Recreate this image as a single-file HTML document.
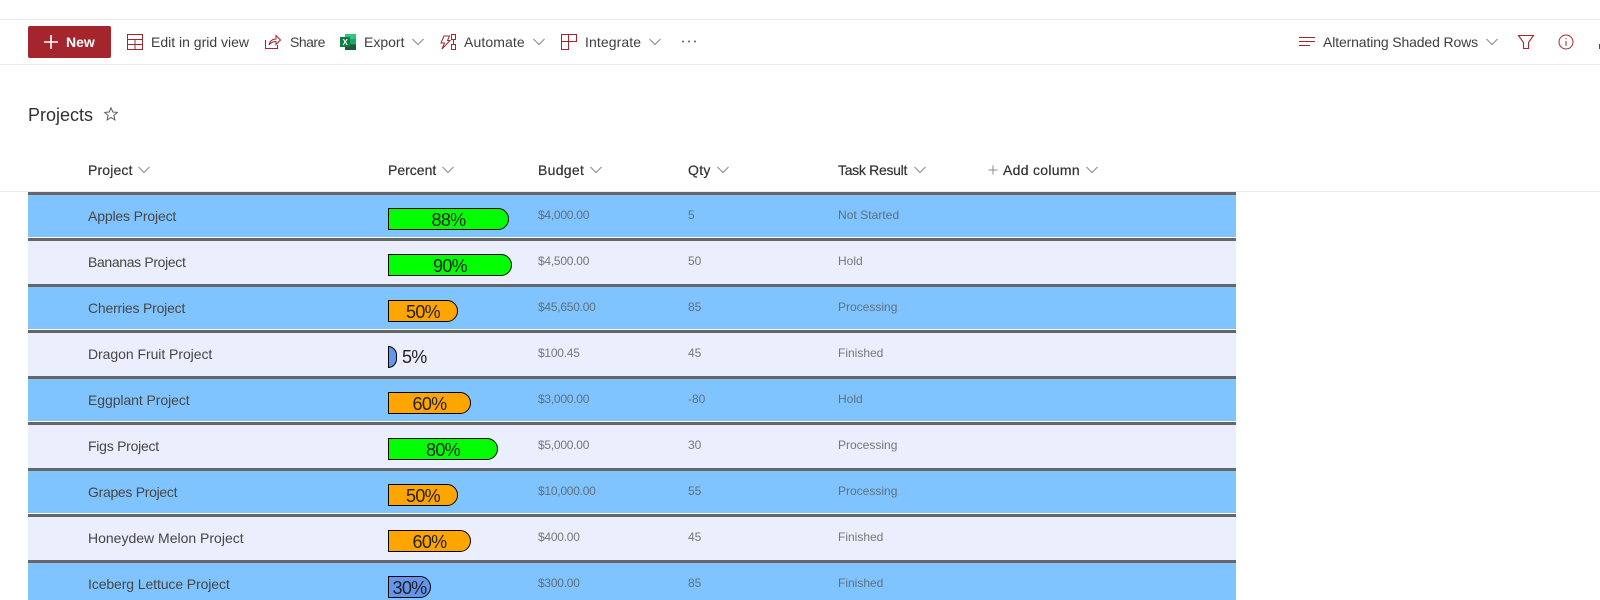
<!DOCTYPE html>
<html><head><meta charset="utf-8"><style>
html,body{margin:0;padding:0;background:#fff;width:1600px;height:600px;overflow:hidden}
body{position:relative;font-family:"Liberation Sans",sans-serif;color:#323130}
.a{position:absolute;white-space:nowrap}
.hl{position:absolute;left:0;width:1600px;height:1px;background:#edebe9}
.t{position:absolute;white-space:nowrap;font-size:14px;line-height:20px;color:#3f3e3d}
.h{position:absolute;white-space:nowrap;font-size:14px;line-height:20px;color:#323130;top:160px;-webkit-text-stroke:.2px #323130}
svg{position:absolute;overflow:visible;fill:none}
.row{position:absolute;left:28px;width:1208px;height:46px;box-sizing:border-box;border-top:3px solid #666;overflow:hidden}
.blue{background:#80c4ff;border-bottom:1px solid #fff}
.lav{background:#eaeefd}
.p{position:absolute;left:60px;top:11px;font-size:14px;line-height:20px;color:#484644;white-space:nowrap}
.s{position:absolute;top:12px;font-size:12px;line-height:16px;color:#777;white-space:nowrap}
.m{letter-spacing:-.25px}
.blue .s{color:#5f6f7d}
.bar{position:absolute;left:360px;top:13px;height:22px;box-sizing:border-box;border:1px solid #000;border-radius:0 11px 11px 0;font-size:18px;line-height:22px;letter-spacing:-.7px;text-align:center;color:#222}
.g{background:#0f0}.o{background:orange}.b{background:#6495ed}
</style></head><body>
<div class="hl" style="top:19px"></div>
<div class="hl" style="top:64px"></div>
<div class="a" style="left:28px;top:26px;width:83px;height:32px;background:#a4262c;border-radius:2px"></div>
<svg style="left:43px;top:34px" width="16" height="16"><path d="M8 1V15M1 8H15" stroke="#fff" stroke-width="1.6"/></svg>
<div class="a" style="left:66px;top:32px;font-size:14px;line-height:20px;font-weight:bold;color:#fff">New</div>

<svg style="left:127px;top:34px" width="16" height="16"><path d="M.5.5H15.500V15.500H.5ZM.5 5.500H15.500M.5 10.500H15.500M8 5.500V15.500" stroke="#a4262c"/></svg>
<div class="t" style="left:151px;top:32px">Edit in grid view</div>
<svg style="left:265px;top:34px" width="16" height="16"><path d="M.5 6V14.500H12.500V11M4 11C5 6.500 8 5 11 5V1.500L15.500 6 11 10.500V7.500C8 7.500 6 8.500 4 11Z" stroke="#a4262c"/></svg>
<div class="t" style="left:290px;top:32px;letter-spacing:-.5px">Share</div>
<svg style="left:340px;top:34px" width="16" height="16"><rect x="5" width="11" height="5.500" fill="#33c481"/><rect x="5" y="5" width="11" height="5.500" fill="#21a366"/><rect x="5" y="10.500" width="11" height="5.500" fill="#185c37"/><rect y="3" width="10" height="10" fill="#107c41"/><text x="2.500" y="11" font-family="Liberation Sans" font-size="8" font-weight="bold" fill="#fff">X</text></svg>
<div class="t" style="left:364px;top:32px">Export</div>
<svg style="left:412px;top:38px" width="12" height="8"><path d="M.5 1L6 6.500 11.500 1" stroke="#8a8886"/></svg>
<svg style="left:440px;top:34px" width="16" height="16"><path d="M4 2H9.500L7.500 6.500H10L2 15 4.500 9H1ZM11.500.5H15.500V5.500H11.500ZM11.500 10.500H15.500V15.500H11.500ZM13.500 5.500V10.500" stroke="#a4262c"/></svg>
<div class="t" style="left:464px;top:32px;letter-spacing:.1px">Automate</div>
<svg style="left:533px;top:38px" width="12" height="8"><path d="M.5 1L6 6.500 11.500 1" stroke="#8a8886"/></svg>
<svg style="left:561px;top:34px" width="16" height="16"><path d="M.5.500H15.500V7.500H.5ZM.5 7.500V15.500H7.500V.5" stroke="#a4262c"/></svg>
<div class="t" style="left:585px;top:32px;letter-spacing:.1px">Integrate</div>
<svg style="left:649px;top:38px" width="12" height="8"><path d="M.5 1L6 6.500 11.500 1" stroke="#8a8886"/></svg>
<svg style="left:681px;top:40px" width="16" height="4"><circle cx="2" cy="1.500" r="1" fill="#605e5c"/><circle cx="8" cy="1.500" r="1" fill="#605e5c"/><circle cx="14" cy="1.500" r="1" fill="#605e5c"/></svg>

<svg style="left:1299px;top:37px" width="16" height="10"><path d="M0 .5H16M0 4.500H16M0 8.500H11" stroke="#a4262c"/></svg>
<div class="t" style="left:1323px;top:32px;letter-spacing:-.13px">Alternating Shaded Rows</div>
<svg style="left:1486px;top:38px" width="12" height="8"><path d="M.5 1L6 6.500 11.500 1" stroke="#8a8886"/></svg>
<svg style="left:1518px;top:35px" width="16" height="15"><path d="M.5.500H15.500L10.500 7.500V13.500H5.500V7.500Z" stroke="#a4262c" stroke-width="1.1"/></svg>
<svg style="left:1558px;top:34px" width="16" height="16"><circle cx="8" cy="8" r="7" stroke="#a4262c"/><path d="M8 7V12M8 4V5.200" stroke="#a4262c"/></svg>
<div class="a" style="left:1599px;top:44px;width:1px;height:5px;background:#a4262c"></div>

<div class="a" style="left:28px;top:103px;font-size:18px;line-height:24px;color:#323130">Projects</div>
<svg style="left:104px;top:107px" width="14" height="14"><path d="M7 .8L8.800 5 13.300 5.400 9.900 8.400 10.900 12.900 7 10.500 3.100 12.900 4.100 8.400 .7 5.400 5.200 5Z" stroke="#605e5c"/></svg>

<div class="h" style="left:88px;letter-spacing:.15px">Project</div>
<svg style="left:138px;top:166px" width="12" height="8"><path d="M.5 1L6 6.500 11.500 1" stroke="#8a8886"/></svg>
<div class="h" style="left:388px">Percent</div>
<svg style="left:442px;top:166px" width="12" height="8"><path d="M.5 1L6 6.500 11.500 1" stroke="#8a8886"/></svg>
<div class="h" style="left:538px;letter-spacing:.3px">Budget</div>
<svg style="left:590px;top:166px" width="12" height="8"><path d="M.5 1L6 6.500 11.500 1" stroke="#8a8886"/></svg>
<div class="h" style="left:688px;letter-spacing:.3px">Qty</div>
<svg style="left:717px;top:166px" width="12" height="8"><path d="M.5 1L6 6.500 11.500 1" stroke="#8a8886"/></svg>
<div class="h" style="left:838px;letter-spacing:-.3px">Task Result</div>
<svg style="left:914px;top:166px" width="12" height="8"><path d="M.5 1L6 6.500 11.500 1" stroke="#8a8886"/></svg>
<svg style="left:988px;top:165px" width="10" height="10"><path d="M5 .5V9.500M.5 5H9.500" stroke="#8a8886"/></svg>
<div class="h" style="left:1003px;letter-spacing:.3px">Add column</div>
<svg style="left:1086px;top:166px" width="12" height="8"><path d="M.5 1L6 6.500 11.500 1" stroke="#8a8886"/></svg>
<div class="hl" style="top:191px"></div>

<div class="row blue" style="top:192px"><span class="p" style="letter-spacing:-.15px">Apples Project</span><div class="bar g" style="width:121px">88%</div><span class="s m" style="left:510px">$4,000.00</span><span class="s" style="left:660px">5</span><span class="s" style="left:810px;letter-spacing:.05px">Not Started</span></div>
<div class="row lav" style="top:238px"><span class="p" style="letter-spacing:-.35px">Bananas Project</span><div class="bar g" style="width:124px">90%</div><span class="s m" style="left:510px">$4,500.00</span><span class="s" style="left:660px">50</span><span class="s" style="left:810px">Hold</span></div>
<div class="row blue" style="top:284px"><span class="p" style="letter-spacing:-.2px">Cherries Project</span><div class="bar o" style="width:70px">50%</div><span class="s m" style="left:510px">$45,650.00</span><span class="s" style="left:660px">85</span><span class="s" style="left:810px">Processing</span></div>
<div class="row lav" style="top:330px"><span class="p" style="letter-spacing:-.05px">Dragon Fruit Project</span><div class="bar b" style="width:9px"></div><span class="a" style="left:374px;top:13px;font-size:18px;line-height:22px;letter-spacing:-.7px;color:#222">5%</span><span class="s m" style="left:510px">$100.45</span><span class="s" style="left:660px">45</span><span class="s" style="left:810px">Finished</span></div>
<div class="row blue" style="top:376px"><span class="p" style="letter-spacing:-.07px">Eggplant Project</span><div class="bar o" style="width:83px">60%</div><span class="s m" style="left:510px">$3,000.00</span><span class="s" style="left:660px">-80</span><span class="s" style="left:810px">Hold</span></div>
<div class="row lav" style="top:422px"><span class="p" style="letter-spacing:-.25px">Figs Project</span><div class="bar g" style="width:110px">80%</div><span class="s m" style="left:510px">$5,000.00</span><span class="s" style="left:660px">30</span><span class="s" style="left:810px">Processing</span></div>
<div class="row blue" style="top:468px"><span class="p" style="letter-spacing:-.3px">Grapes Project</span><div class="bar o" style="width:70px">50%</div><span class="s m" style="left:510px">$10,000.00</span><span class="s" style="left:660px">55</span><span class="s" style="left:810px">Processing</span></div>
<div class="row lav" style="top:514px"><span class="p">Honeydew Melon Project</span><div class="bar o" style="width:83px">60%</div><span class="s m" style="left:510px">$400.00</span><span class="s" style="left:660px">45</span><span class="s" style="left:810px">Finished</span></div>
<div class="row blue" style="top:560px"><span class="p" style="letter-spacing:-.1px">Iceberg Lettuce Project</span><div class="bar b" style="width:43px">30%</div><span class="s m" style="left:510px">$300.00</span><span class="s" style="left:660px">85</span><span class="s" style="left:810px">Finished</span></div>
</body></html>
